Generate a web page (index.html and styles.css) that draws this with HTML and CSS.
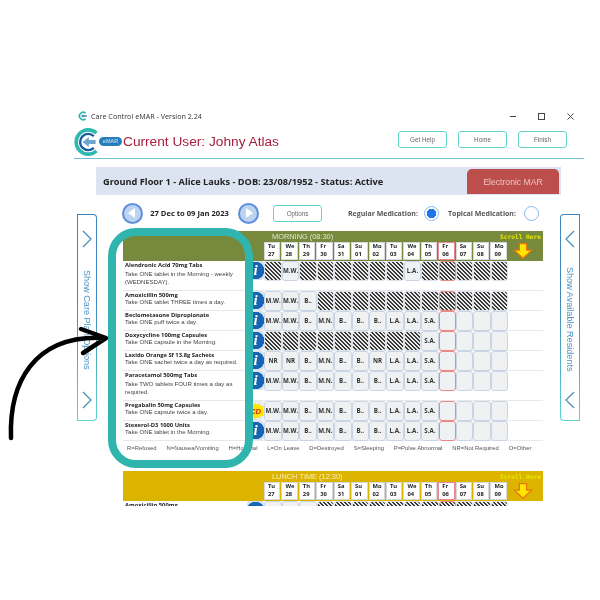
FILE: index.html
```html
<!DOCTYPE html>
<html lang="en">
<head>
  <meta charset="UTF-8">
  <title>Care Control eMAR</title>
  <link rel="stylesheet" href="styles.css">
</head>
<body>
  <div class="window">
    <div class="titlebar">
      <svg class="title-icon" viewBox="0 0 12 12"><path d="M9 2.6A4.4 4.4 0 1 0 9 9.4" fill="none" stroke="#2fb5ad" stroke-width="2"/><path d="M3.6 6l3-2.2v1.3h4v1.8h-4v1.3z" fill="#3f7fb5"/></svg>
      <span class="title-text">Care Control eMAR - Version 2.24</span>
      <div class="win-controls">
        <span class="win-min"></span>
        <span class="win-max"></span>
        <svg class="win-close" viewBox="0 0 8 8"><path d="M.5.5l7 7M7.5.5l-7 7" stroke="#333" stroke-width="1" fill="none"/></svg>
      </div>
    </div>

    <div class="header">
      <svg class="logo" viewBox="0 0 30 32"><path d="M25 6A13.5 13.5 0 1 0 25 26" fill="none" stroke="#2fb8b0" stroke-width="4"/><path d="M22 9.5A9 9 0 1 0 22 22.5" fill="none" stroke="#1c5b9e" stroke-width="2.6"/><path d="M9.500 16l7-5.500v3.200H24v4.600h-7.500v3.200z" fill="#6fa6cf"/></svg>
      <span class="emar-pill">eMAR</span>
      <h1 class="user">Current User: Johny Atlas</h1>
      <div class="header-btns">
        <button class="btn">Get Help</button>
        <button class="btn">Home</button>
        <button class="btn">Finish</button>
      </div>
    </div>

    <div class="resident">
      <span class="resident-name">Ground Floor 1 - Alice Lauks - DOB: 23/08/1952 - Status: Active</span>
      <span class="mar-tab">Electronic MAR</span>
    </div>

    <div class="body-grid">
      <div class="side side-left">
        <svg class="chev" viewBox="0 0 10 18"><path d="M1 1l8 8-8 8" fill="none" stroke="#3f8fbc" stroke-width="1.200"/></svg>
        <span class="side-text">Show Care Plan Options</span>
        <svg class="chev" viewBox="0 0 10 18"><path d="M1 1l8 8-8 8" fill="none" stroke="#3f8fbc" stroke-width="1.200"/></svg>
      </div>

      <div class="centre">
        <div class="date-row">
          <span class="round-btn"><span class="tri-left"></span></span>
          <span class="date-text">27 Dec to 09 Jan 2023</span>
          <span class="round-btn"><span class="tri-right"></span></span>
          <button class="btn btn-options">Options</button>
          <span class="med-label label-regular">Regular Medication:</span>
          <span class="radio radio-on"></span>
          <span class="med-label label-topical">Topical Medication:</span>
          <span class="radio"></span>
        </div>

        <div class="band band-morning">
          <div class="band-title">MORNING (08:30)</div>
          <div class="scroll-here">Scroll Here</div>
          <div class="day">Tu<br>27</div><div class="day">We<br>28</div><div class="day">Th<br>29</div><div class="day">Fr<br>30</div><div class="day">Sa<br>31</div><div class="day">Su<br>01</div><div class="day">Mo<br>02</div><div class="day">Tu<br>03</div><div class="day">We<br>04</div><div class="day">Th<br>05</div><div class="day day-today">Fr<br>06</div><div class="day">Sa<br>07</div><div class="day">Su<br>08</div><div class="day">Mo<br>09</div>
          <svg class="scroll-arrow" viewBox="0 0 22 18"><path d="M7 1h8v7h5.500L11 17 1.500 8H7z" fill="#ffe600" stroke="#e8760c" stroke-width="1.400"/></svg>
        </div>

        <div class="row row-tall">
          <div class="med"><b>Alendronic Acid 70mg Tabs</b><p>Take ONE tablet in the Morning - weekly (WEDNESDAY).</p></div>
          <span class="info">i</span>
          <i class="c h"></i><b class="c">M.W.</b><i class="c h"></i><i class="c h"></i><i class="c h"></i><i class="c h"></i><i class="c h"></i><i class="c h"></i><b class="c">L.A.</b><i class="c h"></i><i class="c h today"></i><i class="c h"></i><i class="c h"></i><i class="c h"></i>
        </div>
        <div class="row">
          <div class="med"><b>Amoxicillin 500mg</b><p>Take ONE tablet THREE times a day.</p></div>
          <span class="info">i</span>
          <b class="c">M.W.</b><b class="c">M.W.</b><b class="c">B..</b><i class="c h"></i><i class="c h"></i><i class="c h"></i><i class="c h"></i><i class="c h"></i><i class="c h"></i><i class="c h"></i><i class="c h today"></i><i class="c h"></i><i class="c h"></i><i class="c h"></i>
        </div>
        <div class="row">
          <div class="med"><b>Beclometasone Dipropionate</b><p>Take ONE puff twice a day.</p></div>
          <span class="info">i</span>
          <b class="c">M.W.</b><b class="c">M.W.</b><b class="c">B..</b><b class="c">M.N.</b><b class="c">B..</b><b class="c">B..</b><b class="c">B..</b><b class="c">L.A.</b><b class="c">L.A.</b><b class="c">S.A.</b><i class="c today"></i><i class="c"></i><i class="c"></i><i class="c"></i>
        </div>
        <div class="row">
          <div class="med"><b>Doxycycline 100mg Capsules</b><p>Take ONE capsule in the Morning.</p></div>
          <span class="info">i</span>
          <i class="c h"></i><i class="c h"></i><i class="c h"></i><i class="c h"></i><i class="c h"></i><i class="c h"></i><i class="c h"></i><i class="c h"></i><i class="c h"></i><b class="c">S.A.</b><i class="c today"></i><i class="c"></i><i class="c"></i><i class="c"></i>
        </div>
        <div class="row">
          <div class="med"><b>Laxido Orange Sf 13.8g Sachets</b><p>Take ONE sachet twice a day as required.</p></div>
          <span class="info">i</span>
          <b class="c">NR</b><b class="c">NR</b><b class="c">B..</b><b class="c">M.N.</b><b class="c">B..</b><b class="c">B..</b><b class="c">NR</b><b class="c">L.A.</b><b class="c">L.A.</b><b class="c">S.A.</b><i class="c today"></i><i class="c"></i><i class="c"></i><i class="c"></i>
        </div>
        <div class="row row-tall">
          <div class="med"><b>Paracetamol 500mg Tabs</b><p>Take TWO tablets FOUR times a day as required.</p></div>
          <span class="info">i</span>
          <b class="c">M.W.</b><b class="c">M.W.</b><b class="c">B..</b><b class="c">M.N.</b><b class="c">B..</b><b class="c">B..</b><b class="c">B..</b><b class="c">L.A.</b><b class="c">L.A.</b><b class="c">S.A.</b><i class="c today"></i><i class="c"></i><i class="c"></i><i class="c"></i>
        </div>
        <div class="row">
          <div class="med"><b>Pregabalin 50mg Capsules</b><p>Take ONE capsule twice a day.</p></div>
          <span class="info info-cd"><svg viewBox="0 0 20 20"><path d="M10 0l2 3 3-2 1 3.500 3.500-.5-.5 3.500L20 10l-1 2.500.5 3.500-3.500-.5-1 3.500-3-2-2 3-2-3-3 2-1-3.500-3.500.5.500-3.500L0 10l1-2.500L.5 4 4 4.500 5 1l3 2z" fill="#ffe500"/><text x="10" y="13.500" text-anchor="middle" class="cd-text">CD</text></svg></span>
          <b class="c">M.W.</b><b class="c">M.W.</b><b class="c">B..</b><b class="c">M.N.</b><b class="c">B..</b><b class="c">B..</b><b class="c">B..</b><b class="c">L.A.</b><b class="c">L.A.</b><b class="c">S.A.</b><i class="c today"></i><i class="c"></i><i class="c"></i><i class="c"></i>
        </div>
        <div class="row">
          <div class="med"><b>Stexerol-D3 1000 Units</b><p>Take ONE tablet in the Morning.</p></div>
          <span class="info">i</span>
          <b class="c">M.W.</b><b class="c">M.W.</b><b class="c">B..</b><b class="c">M.N.</b><b class="c">B..</b><b class="c">B..</b><b class="c">B..</b><b class="c">L.A.</b><b class="c">L.A.</b><b class="c">S.A.</b><i class="c today"></i><i class="c"></i><i class="c"></i><i class="c"></i>
        </div>

        <div class="legend">
          <span>R=Refused</span><span>N=Nausea/Vomiting</span><span>H=Hospital</span><span>L=On Leave</span><span>D=Destroyed</span><span>S=Sleeping</span><span>P=Pulse Abnormal</span><span>NR=Not Required</span><span>O=Other</span>
        </div>

        <div class="band band-lunch">
          <div class="band-title">LUNCH TIME (12:30)</div>
          <div class="scroll-here">Scroll Here</div>
          <div class="day">Tu<br>27</div><div class="day">We<br>28</div><div class="day">Th<br>29</div><div class="day">Fr<br>30</div><div class="day">Sa<br>31</div><div class="day">Su<br>01</div><div class="day">Mo<br>02</div><div class="day">Tu<br>03</div><div class="day">We<br>04</div><div class="day">Th<br>05</div><div class="day day-today">Fr<br>06</div><div class="day">Sa<br>07</div><div class="day">Su<br>08</div><div class="day">Mo<br>09</div>
          <svg class="scroll-arrow" viewBox="0 0 22 18"><path d="M7 1h8v7h5.500L11 17 1.500 8H7z" fill="#ffe600" stroke="#e8760c" stroke-width="1.400"/></svg>
        </div>
        <div class="row">
          <div class="med"><b>Amoxicillin 500mg</b></div>
          <span class="info"></span>
          <i class="c"></i><i class="c"></i><i class="c"></i><i class="c h"></i><i class="c h"></i><i class="c h"></i><i class="c h"></i><i class="c h"></i><i class="c h"></i><i class="c h"></i><i class="c h today"></i><i class="c h"></i><i class="c h"></i><i class="c h"></i>
        </div>
      </div>

      <div class="side side-right">
        <svg class="chev" viewBox="0 0 10 18"><path d="M9 1L1 9l8 8" fill="none" stroke="#3f8fbc" stroke-width="1.200"/></svg>
        <span class="side-text">Show Available Residents</span>
        <svg class="chev" viewBox="0 0 10 18"><path d="M9 1L1 9l8 8" fill="none" stroke="#3f8fbc" stroke-width="1.200"/></svg>
      </div>
    </div>
  </div>

  <div class="highlight"></div>
  <svg class="hand-arrow" viewBox="0 0 600 600"><path d="M11 438C9 385 32 334 105 338M81 329l25 9-23 15" fill="none" stroke="#000" stroke-width="4.500" stroke-linecap="round" stroke-linejoin="round"/></svg>
</body>
</html>
```

FILE: styles.css
```css
* { margin: 0; padding: 0; box-sizing: border-box; }
body {
  width: 600px;
  height: 600px;
  overflow: hidden;
  background-color: white;
  font-family: "Liberation Sans", Arial, sans-serif;
  position: relative;
}
.window {
  width: 510px;
  height: 398px;
  margin: 108px 0 0 74px;
  overflow: hidden;
  filter: blur(0.4px);
}

/* title bar */
.titlebar {
  height: 16px;
  display: flex;
  align-items: center;
  padding-left: 4px;
}
.title-icon { width: 10px; height: 10px; margin-right: 3px; }
.title-text {
  font-family: "Open Sans", sans-serif;
  font-size: 7.2px;
  color: #333;
}
.win-controls {
  margin-left: auto;
  display: flex;
  align-items: center;
}
.win-min { width: 6px; height: 1px; background-color: #444; margin-right: 22px; }
.win-max { width: 7px; height: 7px; border: 1px solid #444; margin-right: 22px; }
.win-close { width: 7px; height: 7px; margin-right: 10px; }

/* header */
.header {
  height: 35px;
  display: flex;
  align-items: center;
  border-bottom: 1.5px solid #6fbfd8;
}
.logo { width: 27px; height: 32px; margin-top: 1px; flex-shrink: 0; }
.emar-pill {
  width: 23px;
  height: 9px;
  margin-left: -2px;
  border-radius: 5px;
  background-color: #2a7dbd;
  color: #cfe8f5;
  font-size: 5.5px;
  line-height: 9px;
  text-align: center;
  flex-shrink: 0;
}
.user {
  margin-left: 1px;
  font-size: 13.7px;
  font-weight: normal;
  color: #a6203e;
  white-space: nowrap;
}
.header-btns {
  margin-left: auto;
  display: flex;
  gap: 11px;
  margin-right: 17px;
  margin-top: -3px;
}
.btn {
  width: 49px;
  height: 17px;
  background-color: white;
  border: 1.5px solid #63d6cc;
  border-radius: 3px;
  font-family: "Liberation Sans", Arial, sans-serif;
  font-size: 6.3px;
  color: #666;
}

/* resident bar */
.resident {
  width: 465px;
  height: 28px;
  margin: 8px 0 0 22px;
  padding: 1px 2px 1px 7px;
  display: flex;
  align-items: center;
  justify-content: space-between;
  background-color: #dbe4f0;
}
.resident-name {
  font-family: "Open Sans", sans-serif;
  font-weight: 700;
  font-size: 9.2px;
  color: #222;
}
.mar-tab {
  width: 92px;
  height: 25px;
  padding-top: 4px;
  background-color: #bc4f4b;
  border-radius: 5px 5px 0 0;
  color: #eec4c0;
  font-size: 8.6px;
  line-height: 18px;
  text-align: center;
}

/* main area */
.body-grid {
  display: grid;
  grid-template-columns: 20px 420px 20px;
  column-gap: 26px;
  margin-left: 3px;
}
.body-grid .side-right { margin-left: -9px; }
.side {
  height: 207px;
  margin-top: 19px;
  width: 20px;
  display: flex;
  flex-direction: column;
  align-items: center;
  justify-content: space-between;
  padding: 15px 0 11px;
  border: 1px solid transparent;
  background: linear-gradient(white, white) padding-box,
    linear-gradient(#3e86c0 40%, #5fd3d3) border-box;
}
.side-left { border-radius: 0 4px 4px 0; }
.side-right { border-radius: 4px 0 0 4px; }
.chev { width: 10px; height: 18px; }
.side-text {
  writing-mode: vertical-rl;
  font-size: 9.1px;
  color: #4d93c4;
  white-space: nowrap;
}
.centre { min-width: 0; }

.date-row {
  height: 30px;
  padding-top: 6px;
  display: flex;
  align-items: center;
  margin-left: -1px;
}
.round-btn {
  width: 21px;
  height: 21px;
  border-radius: 50%;
  border: 2px solid #5c8fdc;
  background-color: #bcd4f2;
  display: flex;
  align-items: center;
  justify-content: center;
  flex-shrink: 0;
}
.tri-left, .tri-right {
  border-top: 5px solid transparent;
  border-bottom: 5px solid transparent;
}
.tri-left { border-right: 7px solid white; margin-right: 2px; }
.tri-right { border-left: 7px solid white; margin-left: 2px; }
.date-text {
  width: 85px;
  margin: 0 6px 0 4px;
  font-family: "Open Sans", sans-serif;
  font-weight: 700;
  font-size: 7.6px;
  color: #222;
  white-space: nowrap;
  text-align: center;
}
.btn-options { margin-left: 14px; }
.med-label {
  font-family: "Open Sans", sans-serif;
  font-weight: 700;
  font-size: 7px;
  color: #555;
  white-space: nowrap;
}
.label-regular { margin-left: 26px; width: 71px; }
.label-topical { margin-left: 9px; width: 68px; }
.radio {
  width: 15px;
  height: 15px;
  margin-left: 5px;
  border-radius: 50%;
  border: 1.5px solid #88b8f0;
  background-color: white;
  flex-shrink: 0;
}
.label-topical + .radio { margin-left: 8px; }
.radio-on { background: radial-gradient(circle, #1c78e8 4.5px, white 5px); }

/* session bands */
.band {
  height: 30px;
  display: grid;
  grid-template-columns: 141px repeat(14, 17.43px) 1fr;
  grid-template-rows: 11px 18px;
  align-items: end;
}
.band-morning { background-color: #76893d; margin-top: 6px; }
.band-lunch { background-color: #dcb400; margin-top: 16px; }
.band-title {
  grid-column: 2 / 12;
  padding-left: 8px;
  font-size: 7.4px;
  line-height: 11px;
  color: #e4e8d0;
}
.band-lunch .band-title { color: #f6eebb; }
.scroll-here {
  grid-column: 12 / -1;
  justify-self: end;
  padding-right: 2px;
  font-family: "DejaVu Sans Mono", monospace;
  font-weight: 700;
  font-size: 6.2px;
  line-height: 11px;
  color: #e8e800;
  white-space: nowrap;
}
.day {
  height: 18px;
  margin-right: 1px;
  background-color: white;
  border: 1px solid #d8d8d8;
  padding-left: 3px;
  font-family: "Open Sans", sans-serif;
  font-weight: 700;
  font-size: 5.8px;
  line-height: 7.5px;
  color: #222;
}
.band .day:nth-of-type(3) { grid-column: 2; }
.day-today { border-color: #e88888; }
.scroll-arrow { width: 20px; height: 18px; justify-self: start; margin-left: 5px; }

/* medication rows */
.row {
  height: 20px;
  display: grid;
  grid-template-columns: 124px repeat(15, 17.43px) 1fr;
  grid-auto-rows: 19.500px;
  border-bottom: 1px solid #e8e8e8;
}
.row-tall { height: 30px; }
.med { padding-left: 2px; padding-top: 1px; white-space: normal; }
.med b {
  display: block;
  font-family: "Open Sans", sans-serif;
  font-weight: 700;
  font-size: 5.8px;
  line-height: 7px;
  color: #222;
  white-space: nowrap;
}
.med p {
  font-size: 6.05px;
  line-height: 7.5px;
  color: #444;
  width: 116px;
}
.row-tall .med p { margin-top: 2px; }
.info {
  position: relative;
  width: 17px;
  height: 19px;
  display: flex;
  align-items: center;
  justify-content: center;
  background:
    radial-gradient(circle at 50% 50%, #1665b5 8.500px, #d6e0ee 9px);
  border-radius: 3px;
  color: white;
  font-family: "Liberation Serif", serif;
  font-style: italic;
  font-weight: 700;
  font-size: 15px;
}
.info-cd { background: #e8ecf2; }
.info-cd svg { width: 18px; height: 18px; }
.cd-text { font-family: "Liberation Sans", sans-serif; font-weight: 700; font-size: 9px; fill: #d42020; }
.c {
  display: flex;
  align-items: center;
  justify-content: center;
  height: 19.500px;
  background-color: #f0f1f3;
  border: 1px solid #c9d4e4;
  border-radius: 3px;
  font-family: "Open Sans", sans-serif;
  font-style: normal;
  font-weight: 700;
  font-size: 6.2px;
  color: #333;
  white-space: nowrap;
}
.h {
  background-image: linear-gradient(45deg, #3a3a3a 25%, #e8e8e8 25%, #e8e8e8 50%, #3a3a3a 50%, #3a3a3a 75%, #e8e8e8 75%);
  background-size: 4px 4px;
  border-color: #dde2ea;
}
.today { border-color: #e88a8a; }

.legend {
  height: 15px;
  display: flex;
  align-items: center;
  gap: 9.800px;
  padding-left: 4px;
  margin-top: -1px;
  font-size: 5.9px;
  color: #555;
  white-space: nowrap;
}

/* annotation drawn over the screenshot */
.highlight {
  position: absolute;
  left: 108px;
  top: 228px;
  width: 145px;
  height: 240px;
  border: 8px solid #2fb5ad;
  border-radius: 28px;
}
.hand-arrow {
  position: absolute;
  left: 0;
  top: 0;
  width: 600px;
  height: 600px;
}
```
